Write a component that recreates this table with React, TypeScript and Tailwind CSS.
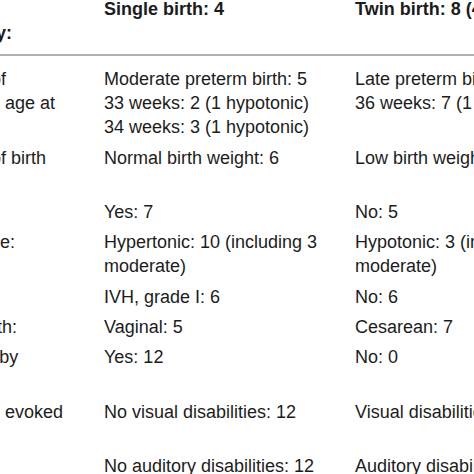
import React from "react";

type Row = {
  label: string[];
  single: string;
  twin: string;
};

const rows: Row[] = [
  {
    label: ["Category of", "gestational age at", "birth:"],
    single: "Moderate preterm birth: 5\n33 weeks: 2 (1 hypotonic)\n34 weeks: 3 (1 hypotonic)",
    twin: "Late preterm birth: 7\n36 weeks: 7 (1 hypotonic)",
  },
  {
    label: ["Category of birth", "weight:"],
    single: "Normal birth weight: 6",
    twin: "Low birth weight: 6",
  },
  { label: ["Jaundice:"], single: "Yes: 7", twin: "No: 5" },
  {
    label: ["Muscle tone:"],
    single: "Hypertonic: 10 (including 3 moderate)",
    twin: "Hypotonic: 3 (including 1 moderate)",
  },
  { label: ["Brain US:"], single: "IVH, grade I: 6", twin: "No: 6" },
  { label: ["Type of birth:"], single: "Vaginal: 5", twin: "Cesarean: 7" },
  { label: ["Treatment by", "therapist:"], single: "Yes: 12", twin: "No: 0" },
  {
    label: ["Findings in evoked", "potentials:"],
    single: "No visual disabilities: 12",
    twin: "Visual disabilities: 0",
  },
  {
    label: ["Hearing:"],
    single: "No auditory disabilities: 12",
    twin: "Auditory disabilities: 0",
  },
];

export default function App() {
  return (
    <div className="w-[474px] h-[474px] overflow-hidden bg-white text-[#1c1c1c] font-['Liberation_Sans',Arial,sans-serif] text-[18px] leading-[24px]">
      <div className="-ml-[87px] -mt-[3px] w-[700px]">
        {/* header */}
        <div className="grid grid-cols-[176px_236px_260px] gap-x-[15px] pb-[9px] border-b-2 border-[#b0b0b0] font-bold">
          <div className="pl-[6px]">
            <div>Clinical</div>
            <div>neurology:</div>
          </div>
          <div>Single birth: 4</div>
          <div>Twin birth: 8 (4 pairs)</div>
        </div>

        {/* body */}
        <div className="pt-[8px]">
          {rows.map((row, i) => (
            <div
              key={i}
              className="grid grid-cols-[176px_236px_250px] gap-x-[15px] py-[3.2px]"
            >
              <div className="whitespace-nowrap">
                {row.label.map((l, j) => (
                  <div key={j}>{l}</div>
                ))}
              </div>
              <div className="whitespace-pre-line">{row.single}</div>
              <div className="whitespace-pre-line">{row.twin}</div>
            </div>
          ))}
        </div>
      </div>
    </div>
  );
}
